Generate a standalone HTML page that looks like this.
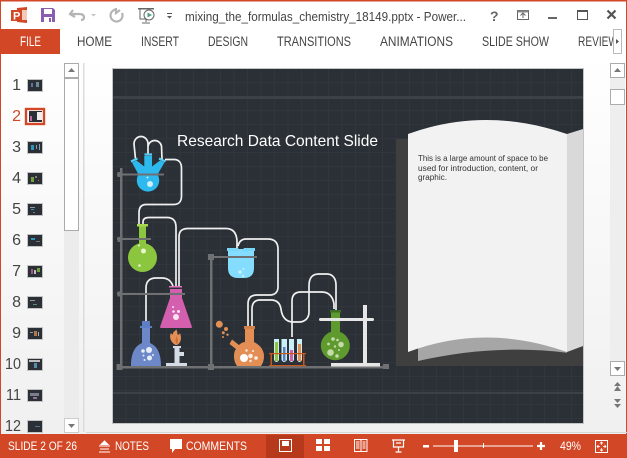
<!DOCTYPE html>
<html><head><meta charset="utf-8">
<style>
html,body{margin:0;padding:0;width:627px;height:458px;overflow:hidden;background:#fff}
svg{display:block}
text{font-family:"Liberation Sans",sans-serif}
</style></head><body>
<svg width="627" height="458" viewBox="0 0 627 458" xmlns="http://www.w3.org/2000/svg">
<defs>
<linearGradient id="bg" x1="0" y1="0" x2="0" y2="1"><stop offset="0" stop-color="#ffffff"/><stop offset="1" stop-color="#f0f0f0"/></linearGradient>
<pattern id="grid" width="13.5" height="14" patternUnits="userSpaceOnUse" x="113" y="69"><rect width="13.5" height="14" fill="#2a3036"/><path d="M13 0V14M0 13.5H13.5" stroke="#30363c" stroke-width="1"/></pattern>
</defs>
<rect width="627" height="458" fill="#fff"/>
<rect x="0" y="54" width="627" height="380" fill="url(#bg)"/>
<!-- window border -->
<rect x="0" y="0" width="627" height="1.5" fill="#d24726"/>
<rect x="0" y="0" width="1" height="458" fill="#d24726"/>
<rect x="626" y="0" width="1" height="458" fill="#d24726"/>
<!-- QAT -->
<path d="M17 8L27 7V23L17 22Z" fill="#d24726"/><rect x="21" y="10" width="6" height="10" fill="#f5c9b8"/><rect x="11" y="10" width="11" height="11" fill="#d24726"/><text x="13" y="19.5" font-size="11" font-weight="bold" fill="#fff">P</text>
<path d="M41 8H53L55 10V22H41Z" fill="#8a5db0"/><rect x="44" y="9" width="8" height="5" fill="#fff"/><rect x="44" y="17" width="8" height="5" fill="#fff"/><rect x="49" y="18" width="2" height="4" fill="#8a5db0"/>
<path d="M73 10L70 14L75 17M71 14H79Q84 14 84 17.5Q84 20 81 20" fill="none" stroke="#b5b5b5" stroke-width="2.2"/>
<path d="M91 14H96L93.5 16.5Z" fill="#c4c4c4"/>
<path d="M116 9.5A6 6 0 1 0 122 13M116 8V13L120 10" fill="none" stroke="#b5b5b5" stroke-width="2.2"/>
<rect x="138" y="8" width="16" height="1.5" fill="#666"/><path d="M140 9V19H146M146 19V22M142 23H150" fill="none" stroke="#666" stroke-width="1"/><circle cx="149" cy="15" r="5" fill="#fff" stroke="#666"/><path d="M147.5 12.5L152 15L147.5 17.5Z" fill="#4fa07f"/>
<rect x="167" y="13" width="5" height="1" fill="#555"/><path d="M167 16H172L169.500 18.500Z" fill="#555"/>
<text x="185" y="21" font-size="13" fill="#444" textLength="281" lengthAdjust="spacingAndGlyphs">mixing_the_formulas_chemistry_18149.pptx - Power...</text>
<text x="490" y="21" font-size="14" font-weight="bold" fill="#666">?</text>
<rect x="517.500" y="10.500" width="11" height="9" fill="none" stroke="#666"/><rect x="517.500" y="10.500" width="11" height="2" fill="#888"/><path d="M523 18V14M520.500 15.500L523 13L525.500 15.500" stroke="#666" fill="none"/>
<rect x="548" y="17" width="9" height="2" fill="#666"/>
<rect x="577.500" y="10.500" width="10" height="9" fill="none" stroke="#555"/><rect x="577" y="10" width="11" height="2" fill="#555"/>
<path d="M607.500 10.500L615.500 18.500M615.500 10.500L607.500 18.500" stroke="#555" stroke-width="2.200"/>
<!-- Ribbon tabs -->
<rect x="1" y="29" width="59" height="25" fill="#d24726"/>
<text x="20" y="46" font-size="13.500" fill="#fff" textLength="21" lengthAdjust="spacingAndGlyphs">FILE</text>
<g font-size="13.500" fill="#444">
<text x="77" y="46" textLength="35" lengthAdjust="spacingAndGlyphs">HOME</text>
<text x="141" y="46" textLength="38" lengthAdjust="spacingAndGlyphs">INSERT</text>
<text x="208" y="46" textLength="40" lengthAdjust="spacingAndGlyphs">DESIGN</text>
<text x="277" y="46" textLength="74" lengthAdjust="spacingAndGlyphs">TRANSITIONS</text>
<text x="380" y="46" textLength="73" lengthAdjust="spacingAndGlyphs">ANIMATIONS</text>
<text x="482" y="46" textLength="67" lengthAdjust="spacingAndGlyphs">SLIDE SHOW</text>
<text x="578" y="46" textLength="40" lengthAdjust="spacingAndGlyphs">REVIEW</text>
</g>
<rect x="613.500" y="29.500" width="8" height="24" fill="#fff" stroke="#bbb"/><path d="M616 39V44L619 41.500Z" fill="#555"/>
<!-- left scrollbar -->
<rect x="64" y="78" width="15" height="340" fill="#ececec"/>
<rect x="64.500" y="63.500" width="14" height="14" fill="#fff" stroke="#ababab"/><path d="M68 72H75L71.500 68Z" fill="#777"/>
<rect x="64.500" y="78.500" width="14" height="152" fill="#fff" stroke="#ababab"/>
<rect x="64.500" y="418.500" width="14" height="14" fill="#fff" stroke="#ccc"/><path d="M68 424H75L71.500 428Z" fill="#777"/>
<rect x="83" y="63" width="1.500" height="369" fill="#dcdcdc"/>
<rect x="86" y="432" width="541" height="1" fill="#d6d6d6"/>
<!-- thumbs -->
<g font-size="16" fill="#444" text-anchor="end">
<text x="21" y="90">1</text><text x="21" y="121" fill="#d24726">2</text><text x="21" y="152">3</text><text x="21" y="183">4</text><text x="21" y="214">5</text><text x="21" y="245">6</text><text x="21" y="276">7</text><text x="21" y="307">8</text><text x="21" y="338">9</text><text x="21" y="369" textLength="16" lengthAdjust="spacingAndGlyphs">10</text><text x="21" y="400" textLength="15" lengthAdjust="spacingAndGlyphs">11</text><text x="21" y="431" textLength="16" lengthAdjust="spacingAndGlyphs">12</text>
</g>
<g fill="#2a3036" stroke="#c4c4c4" stroke-width="1">
<rect x="27.500" y="79.500" width="15" height="12"/><rect x="27.500" y="141.500" width="15" height="12"/><rect x="27.500" y="172.500" width="15" height="12"/><rect x="27.500" y="203.500" width="15" height="12"/><rect x="27.500" y="234.500" width="15" height="12"/><rect x="27.500" y="265.500" width="15" height="12"/><rect x="27.500" y="296.500" width="15" height="12"/><rect x="27.500" y="327.500" width="15" height="12"/><rect x="27.500" y="358.500" width="15" height="12"/><rect x="27.500" y="389.500" width="15" height="12"/><rect x="27.500" y="420.500" width="15" height="12"/>
</g>
<rect x="26" y="109" width="18" height="15" fill="#fff" stroke="#d24726" stroke-width="2.400"/>
<rect x="29" y="111" width="13" height="11" fill="#2a3036"/><rect x="37" y="112" width="5" height="8" fill="#eee"/><rect x="30" y="116" width="2" height="5" fill="#c765a5"/>
<g opacity="0.75">
<rect x="31" y="83" width="2" height="4" fill="#6d8ac8"/><rect x="36" y="82" width="3" height="5" fill="#8aa"/>
<rect x="31" y="145" width="3" height="5" fill="#2cb9ef"/><rect x="36" y="145" width="1" height="4" fill="#bbb"/><rect x="39" y="144" width="1" height="6" fill="#8fd0e8"/>
<rect x="31" y="177" width="3" height="5" fill="#8cc63f"/><rect x="35" y="176" width="2" height="2" fill="#999"/><rect x="38" y="180" width="1" height="1" fill="#e28e55"/>
<rect x="30" y="207" width="5" height="1" fill="#bbb"/><rect x="31" y="209" width="3" height="1" fill="#2cb9ef"/><rect x="33" y="212" width="2" height="1" fill="#999"/>
<rect x="31" y="238" width="4" height="2" fill="#2cb9ef"/><rect x="36" y="241" width="4" height="1" fill="#888"/>
<rect x="31" y="269" width="2" height="5" fill="#c765a5"/><rect x="34" y="270" width="2" height="4" fill="#eee"/><rect x="37" y="268" width="3" height="4" fill="#8cc63f"/>
<rect x="30" y="300" width="5" height="1" fill="#bbb"/><rect x="33" y="304" width="4" height="1" fill="#6a8"/>
<rect x="30" y="332" width="3" height="1" fill="#bbb"/><rect x="34" y="331" width="3" height="5" fill="#e28e55"/><rect x="38" y="332" width="1" height="4" fill="#ddd"/>
<rect x="29" y="360" width="11" height="2" fill="#eee"/><rect x="34" y="363" width="3" height="5" fill="#6ac"/>
<rect x="30" y="393" width="9" height="3" fill="#99a"/><rect x="33" y="397" width="4" height="2" fill="#b8b"/>
<rect x="35" y="426" width="5" height="1" fill="#68a"/>
</g>
<!-- right scrollbar -->
<rect x="610" y="63" width="15" height="298" fill="#eeeeee"/>
<rect x="610.500" y="63.500" width="14" height="14" fill="#fff" stroke="#ababab"/><path d="M614 72H621L617.500 68Z" fill="#777"/>
<rect x="610.500" y="89.500" width="14" height="15" fill="#fff" stroke="#ababab"/>
<rect x="610.500" y="361.500" width="14" height="14" fill="#fff" stroke="#ababab"/><path d="M614 367H621L617.500 371Z" fill="#777"/>
<path d="M614 386H621L617.500 382ZM614 391H621L617.500 386Z" fill="#777"/>
<path d="M614 399H621L617.500 403ZM614 404H621L617.500 408Z" fill="#777"/>
<!-- slide -->
<rect x="112.500" y="68.500" width="471" height="355" fill="#fff" stroke="#c4c4c4"/>
<rect x="113" y="69" width="470" height="354" fill="url(#grid)"/>
<rect x="113" y="96" width="470" height="3" fill="#3b4147"/>
<rect x="113" y="392" width="470" height="2" fill="#3b4147"/>
<text x="177" y="146" font-size="16" fill="#fff" textLength="201" lengthAdjust="spacingAndGlyphs">Research Data Content Slide</text>
<!-- book -->
<rect x="396" y="139" width="187" height="227" fill="#403f3f"/>
<path d="M418 361V330H567V352.700C520 347 470 349 418 361Z" fill="#a6a6a6"/>
<path d="M567 134L583 129V346L567 352Z" fill="#d9d9d9"/>
<path d="M408 134Q485 106 567 134V352Q485 323 408 352Z" fill="#f2f2f2"/>
<g font-size="7.800" fill="#333">
<text x="418" y="161" textLength="130" lengthAdjust="spacingAndGlyphs">This is a large amount of space to be</text>
<text x="418" y="171" textLength="120" lengthAdjust="spacingAndGlyphs">used for introduction, content, or</text>
<text x="418" y="180" textLength="29" lengthAdjust="spacingAndGlyphs">graphic.</text>
</g>
<!-- stands -->
<g fill="#6f7071">
<rect x="120" y="168" width="2.500" height="199"/>
<rect x="117" y="173.500" width="47" height="2"/>
<rect x="117" y="238" width="34" height="2"/>
<rect x="117" y="293" width="68" height="2"/>
<rect x="210" y="256" width="2.500" height="111"/>
<rect x="210" y="256" width="47" height="2"/>
<rect x="117" y="366" width="271" height="2.500"/>
<rect x="117.500" y="172" width="5" height="5"/><rect x="117.500" y="237" width="5" height="5"/><rect x="117.500" y="291.500" width="5" height="5"/><rect x="116.500" y="364" width="6" height="6"/>
<rect x="208" y="254" width="6" height="6"/><rect x="208" y="364" width="6" height="6"/><rect x="383" y="364" width="6" height="5"/>
</g>
<!-- tubes -->
<g fill="none" stroke="#f0f0f0" stroke-width="1.700">
<path d="M135.500 159L134 144A7 7.500 0 0 1 148 144V154"/>
<path d="M148 146A7 7.500 0 0 1 161.500 146L162 159"/>
<path d="M165 159.500H174C179 159.500 181.500 163 181.500 168V196C181.500 201 179 204.500 174 204.500H146C141 204.500 139 208 139 213V224"/>
<path d="M143 224V222C143 219 145 217.500 149 217.500H167C173 217.500 176 221 176 227V286"/>
<path d="M179 286V237C179 231 182 228.500 188 228.500H226C233 228.500 236.500 233 237 241V249"/>
<path d="M146 321V288C146 281 150 278 156 278H162C168 278 171 281 173 286"/>
<path d="M248 326V304C248 298 251 295 257 295H270C275 295 278 292 278 287V249C278 242 274 239 268 239H246C241 239 239 242 238 246"/>
<path d="M252 326V309C252 303 255 300 260 300H271C277 300 280 303 281 309C282 318 287 322 293 322H299C305 322 309 318 309 312V286C309 278 312 274 319 274H327C333 274 336 279 336 285V310"/>
<path d="M292 337V301C292 295 295 292 301 292H322C329 292 333 297 334 304V309"/>
</g>
<!-- blue top flask -->
<path d="M132 162.500L136.500 160.500L144.300 166.500V156H152V166.500L160 160.500L164.500 162.500L157.500 174.500A11.200 11.200 0 1 1 138.500 174.500Z" fill="#2db9ee"/>
<path d="M131 161.500L137.500 158.500M144.500 154.500H152M159 158.500L165.500 161.500" stroke="#56cdf5" stroke-width="2.200"/>
<rect x="117" y="173.500" width="47" height="2" fill="#6f7071"/>
<circle cx="150" cy="184" r="3" fill="#cfeffb"/><circle cx="147.500" cy="177.500" r="1" fill="#cfeffb"/>
<!-- green flask -->
<rect x="137" y="224" width="11" height="2.500" fill="#a7d64f"/>
<rect x="139" y="226.500" width="7" height="20" fill="#8cc63f"/>
<circle cx="142.500" cy="257.500" r="14.500" fill="#8cc63f"/>
<rect x="117" y="238" width="34" height="2" fill="#6f7071"/>
<circle cx="143.500" cy="251" r="2.500" fill="#e8f5d0"/><circle cx="139" cy="245.500" r="1" fill="#e8f5d0"/><circle cx="139.500" cy="265.500" r="1.300" fill="#e8f5d0"/>
<!-- pink flask -->
<rect x="169" y="286" width="13" height="1.500" fill="#e477c0"/>
<path d="M170 289H182V298L192 327Q192 328 190 328H162Q160 328 160 327L170 298Z" fill="#d45fae"/>
<rect x="117" y="293" width="68" height="2" fill="#6f7071"/>
<circle cx="176" cy="317" r="3" fill="#f8e5f2"/><circle cx="173.500" cy="311.500" r="1.300" fill="#f8e5f2"/><circle cx="178.500" cy="311.500" r="1.500" fill="#f8e5f2"/><circle cx="173" cy="307" r="1" fill="#f8e5f2"/>
<!-- blue flask -->
<rect x="142" y="321" width="8" height="5" fill="#5f7fc5"/>
<rect x="140" y="326" width="12" height="2" fill="#5f7fc5"/>
<path d="M142 328H150V343C157 346 161 353 161 366H131C131 353 135 346 142 343Z" fill="#6c88c9"/>
<circle cx="149" cy="350" r="3" fill="#e8edf7"/><circle cx="143" cy="351" r="1.800" fill="#e8edf7"/><circle cx="149.500" cy="358" r="2.500" fill="#e8edf7"/><circle cx="143.500" cy="355.500" r="1" fill="#e8edf7"/><circle cx="144.500" cy="360" r="1" fill="#e8edf7"/><circle cx="153" cy="355" r="1" fill="#e8edf7"/>
<!-- burner -->
<path d="M175.500 345C170 342 169 336 171 333C172 335 173 335 173 333C174 331 176 331 176 329C178 332 177 334 178 335C179 334 180 334 180 333C182 338 181 343 177 345Z" fill="#e28e55"/>
<path d="M176 343C175 340 176 338 176.500 336C178 339 178 341 177.500 344Z" fill="#c96f38"/>
<path d="M173 346H181V348H179.500V352H184V356H179.500V363H187V366H166V363H174.500V348H173Z" fill="#d6dce5"/>
<!-- orange flask -->
<rect x="244" y="326" width="11" height="3" fill="#d47f45"/>
<path d="M245 329H254V342C260 345 264 350 264 356C264 360 263 363 261 366H237C235 363 234 360 234 356C234 353 235 350 236 349L229.500 344L232 339.500L239 345C241 343 243 342 245 342Z" fill="#e28e55"/>
<circle cx="219.300" cy="324.300" r="3.500" fill="#e28e55"/><circle cx="226" cy="329" r="2" fill="#e28e55"/><circle cx="223.300" cy="332.700" r="1.500" fill="#e28e55"/><circle cx="227.500" cy="334.700" r="1.200" fill="#e28e55"/><circle cx="223" cy="337" r="1" fill="#e28e55"/>
<circle cx="244" cy="358" r="4" fill="#fff"/><circle cx="250.500" cy="356" r="2.300" fill="#fbeee5"/><circle cx="256" cy="358" r="1.800" fill="#fbeee5"/><circle cx="246.500" cy="350.500" r="1.200" fill="#fbeee5"/><circle cx="253" cy="351" r="1" fill="#fbeee5"/><circle cx="250.500" cy="361" r="1.200" fill="#fbeee5"/>
<!-- beaker -->
<path d="M228 249H254V268Q254 278 244 278H238Q228 278 228 268Z" fill="#84dcff"/>
<path d="M227 248H238L240 251H227ZM255 248H244L242 251H255Z" fill="#7ad6f7"/>
<rect x="210" y="256" width="47" height="2" fill="#6f7071"/>
<circle cx="240" cy="272" r="1.800" fill="#c8f0ff"/><circle cx="243" cy="276" r="1.200" fill="#c8f0ff"/><circle cx="243.500" cy="269" r="1" fill="#c8f0ff"/>
<!-- test tubes -->
<g fill="#cbeff8">
<path d="M274 339H279V360Q276.500 364 274 360Z"/><path d="M281.500 339H287V360Q284 364 281.500 360Z"/><path d="M289 339H294V360Q291.500 364 289 360Z"/><path d="M297 339H302V360Q299.500 364 297 360Z"/>
</g>
<rect x="275" y="342" width="3" height="19" fill="#8cc63f"/>
<rect x="283" y="347" width="2.500" height="14" fill="#5a7fc0"/>
<rect x="290" y="350" width="3" height="11" fill="#d45fae"/>
<rect x="298" y="344" width="3" height="17" fill="#e28e55"/>
<g fill="#c8581d"><rect x="269" y="353" width="37" height="1.200"/><rect x="270.500" y="353" width="1.500" height="13"/><rect x="303" y="353" width="1.500" height="13"/><rect x="269" y="365" width="37" height="1.200"/></g>
<!-- dark green flask -->
<rect x="330" y="310" width="11" height="2.500" fill="#3e6e22"/>
<rect x="331" y="312.500" width="9" height="22" fill="#5e9a2e"/>
<circle cx="335.300" cy="345.700" r="14.500" fill="#5e9a2e"/>
<circle cx="330.500" cy="352.500" r="3.300" fill="#c5dbaa"/><circle cx="341" cy="344.500" r="2.800" fill="#c5dbaa"/><circle cx="333" cy="339" r="1.800" fill="#c5dbaa"/><circle cx="337" cy="356" r="1.800" fill="#c5dbaa"/><circle cx="328.500" cy="344" r="1.400" fill="#c5dbaa"/><circle cx="337.500" cy="340" r="1.300" fill="#c5dbaa"/><circle cx="335" cy="346.500" r="1.200" fill="#c5dbaa"/><circle cx="339" cy="350" r="1" fill="#c5dbaa"/>
<!-- stand white -->
<g fill="#e6e6e6"><rect x="363" y="305" width="4" height="60"/><rect x="319" y="318" width="55" height="3" rx="1.500"/><rect x="331" y="363" width="49" height="3.500"/></g>
<!-- status bar -->
<rect x="0" y="434" width="627" height="24" fill="#d24726"/>
<rect x="266" y="435" width="38" height="23" fill="#b7391c"/>
<g font-size="12" fill="#fff">
<text x="8" y="450" textLength="69" lengthAdjust="spacingAndGlyphs">SLIDE 2 OF 26</text>
<text x="115" y="450" textLength="34" lengthAdjust="spacingAndGlyphs">NOTES</text>
<text x="186" y="450" textLength="61" lengthAdjust="spacingAndGlyphs">COMMENTS</text>
<text x="560" y="450" textLength="21" lengthAdjust="spacingAndGlyphs">49%</text>
</g>
<path d="M104.500 441L101 444.500H108ZM99 446H110M100 449H109M99 452H110" stroke="#fff" stroke-width="1" fill="#fff"/>
<path d="M170 439H182V449H175L172 453V449H170Z" fill="#fff"/>
<rect x="279.500" y="439.500" width="12" height="12" fill="none" stroke="#fff"/><rect x="282" y="441" width="7" height="5" fill="#fff"/>
<g fill="#fff"><rect x="316" y="439" width="6" height="5"/><rect x="324" y="439" width="6" height="5"/><rect x="316" y="446" width="6" height="5"/><rect x="324" y="446" width="6" height="5"/></g>
<path d="M354.500 439.500H360.500L361 440.500L361.500 439.500H367V451.500H354.500ZM361 440.500V452M356 442H359.500M356 444H359.500M356 446H359.500M356 448H359.500M362.500 442H365.500M362.500 444H365.500M362.500 446H365.500M362.500 448H365.500" fill="none" stroke="#fff" stroke-width="1"/>
<path d="M392 440H405M393.500 440V447H403.500V440M398.500 447V452M395.500 452H401.500M396 443H401" fill="none" stroke="#fff" stroke-width="1.200"/>
<rect x="423" y="445" width="6" height="2.500" fill="#fff"/>
<rect x="433" y="445.500" width="100" height="1" fill="#fff"/>
<rect x="454" y="440" width="4" height="12" fill="#fff"/>
<rect x="483" y="443" width="1" height="5" fill="#fff"/>
<path d="M537 446H545M541 442V450" stroke="#fff" stroke-width="2.200"/>
<rect x="595.500" y="440.500" width="12" height="12" fill="none" stroke="#fff"/>
<path d="M601.500 442V445M600 443.500L601.500 442L603 443.500M601.500 451V448M600 449.500L601.500 451L603 449.500M597 446.500H600M598.500 445L597 446.500L598.500 448M606 446.500H603M604.500 445L606 446.500L604.500 448" fill="none" stroke="#fff" stroke-width="0.800"/>
</svg>
</body></html>
